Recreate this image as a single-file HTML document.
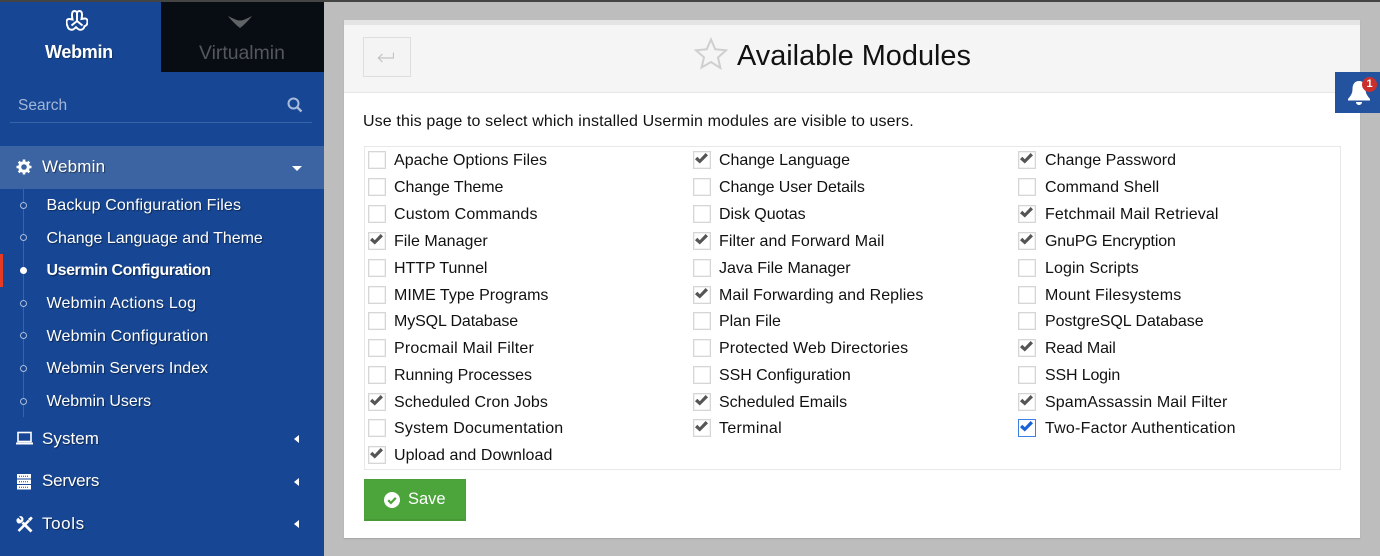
<!DOCTYPE html>
<html><head><meta charset="utf-8">
<style>
html,body{margin:0;padding:0}
body{width:1380px;height:556px;overflow:hidden;position:relative;background:#bdbdbd;font-family:"Liberation Sans",sans-serif}
.a{position:absolute;white-space:nowrap}
.side{left:0;top:0;width:324px;height:556px;background:#174794}
.m{color:#fff;font-size:16px;line-height:20px;left:46.5px;text-shadow:1px 1px 1px rgba(0,0,0,.45)}
.t{color:#fff;font-size:17px;line-height:22px;left:42px;text-shadow:1px 1px 1px rgba(0,0,0,.45)}
.d{left:20px;width:5px;height:5px;border:1px solid #a9bcdc;border-radius:50%;background:#174794}
.l{color:#111;font-size:16px;line-height:20px;letter-spacing:-.05px}
.c{width:16px;height:16px;border:1px solid #d6d6d6;background:#fff;box-shadow:inset 0 0 0 .5px #e6e6e6}
.c svg{position:absolute;left:1px;top:1px}
.lt{width:0;height:0;border-top:4.5px solid transparent;border-bottom:4.5px solid transparent;border-right:5px solid #fff;left:294px}
</style></head><body>
<svg width="0" height="0" style="position:absolute"><defs><path id="k" d="M0 6.200L2.300 3.800 4.800 6.300 10.600 0 13 2.400 4.800 10.500z"/></defs></svg>
<div class="a" style="left:0;top:0;width:1380px;height:2px;background:#444;z-index:9"></div>
<div class="a side"></div>
<div class="a" style="left:161px;top:2px;width:163px;height:70px;background:#080d13"></div>
<svg class="a" style="left:66px;top:10px" width="22" height="22" viewBox="0 0 22 22"><path d="M7 1.500c1.500-1 3-.5 4 1c1-1.500 2.500-2 4-1c1.500 1.200 1 5 .5 7.500l3-.5c2-.3 3 1.200 3 3.200c0 2.500-1.200 4-3 4.500c-.5 2.500-2.500 4-5 3.500c-1-.2-2-1-3.500-2.500c-1.500 1.500-2.500 2.300-3.500 2.500c-2.500.5-4.500-1-5-3.500C1.700 16.200.5 14.700.5 12.200c0-2 1-3.500 3-3.200l3 .5c-.5-2.500-1-6.300.5-8z" fill="none" stroke="#fff" stroke-width="2"/><path d="M11 3v8M5.500 15.500l5.500-4.500 5.500 4.500" fill="none" stroke="#fff" stroke-width="2"/></svg>
<div class="a" style="left:45px;top:40px;color:#fff;font-size:18px;font-weight:700;line-height:24px;letter-spacing:-.3px;text-shadow:1px 1px 1px rgba(0,0,0,.3)">Webmin</div>
<svg class="a" style="left:228px;top:16px" width="24" height="12" viewBox="0 0 24 12"><path d="M0 0C6 3 9 4.500 12 4.500S18 3 24 0C20 5 16 9 12 12C8 9 4 5 0 0z" fill="#606366"/></svg>
<div class="a" style="left:199px;top:41px;color:#54575b;font-size:19.400px;line-height:24px">Virtualmin</div>
<div class="a" style="left:18px;top:96px;color:#a3b6d6;font-size:15.500px;line-height:20px">Search</div>
<svg class="a" style="left:287px;top:97px" width="16" height="16" viewBox="0 0 16 16"><circle cx="6.500" cy="6.500" r="5" fill="none" stroke="#a9bcdc" stroke-width="2"/><path d="M10.300 10.300l4.200 4.200" stroke="#a9bcdc" stroke-width="2.400"/></svg>
<div class="a" style="left:10px;top:122px;width:302px;height:1px;background:#3a62a6"></div>
<div class="a" style="left:0;top:146px;width:324px;height:43px;background:#3c64a3"></div>
<svg class="a" style="left:16px;top:159px" width="16" height="16" viewBox="0 0 16 16"><circle cx="8" cy="8" r="4.300" fill="none" stroke="#fff" stroke-width="3"/><path d="M8 .5v3M8 12.500v3M.5 8h3M12.500 8h3M2.700 2.700l2.100 2.100M11.200 11.200l2.100 2.100M13.300 2.700l-2.100 2.100M4.800 11.200l-2.100 2.100" stroke="#fff" stroke-width="2.600"/></svg>
<div class="a t" style="top:156px;letter-spacing:.2px">Webmin</div>
<div class="a" style="left:292px;top:166px;width:0;height:0;border-left:5px solid transparent;border-right:5px solid transparent;border-top:5px solid #fff"></div>
<div class="a" style="left:23px;top:189px;width:1px;height:228px;background:#3a62a6"></div>
<div class="a" style="left:0;top:254px;width:3px;height:33px;background:#e53a26"></div>
<div class="a d" style="top:202px"></div><div class="a d" style="top:234px"></div>
<div class="a" style="left:20px;top:267px;width:7px;height:7px;border-radius:50%;background:#fff"></div>
<div class="a d" style="top:300px"></div><div class="a d" style="top:332px"></div><div class="a d" style="top:365px"></div><div class="a d" style="top:398px"></div>
<div class="a m" style="top:196px;letter-spacing:.13px">Backup Configuration Files</div>
<div class="a m" style="top:229px;letter-spacing:-.02px">Change Language and Theme</div>
<div class="a m" style="top:261px;font-weight:700;letter-spacing:-.44px">Usermin Configuration</div>
<div class="a m" style="top:294px;letter-spacing:.23px">Webmin Actions Log</div>
<div class="a m" style="top:327px;letter-spacing:.2px">Webmin Configuration</div>
<div class="a m" style="top:359px;letter-spacing:0">Webmin Servers Index</div>
<div class="a m" style="top:392px;letter-spacing:0">Webmin Users</div>
<svg class="a" style="left:15px;top:431px" width="19" height="15" viewBox="0 0 19 15"><rect x="3" y="1.500" width="13" height="9" fill="none" stroke="#fff" stroke-width="1.600"/><rect x="1" y="11.500" width="17" height="2" fill="#fff"/></svg>
<div class="a t" style="top:428px;letter-spacing:.05px">System</div><div class="a lt" style="top:435px"></div>
<svg class="a" style="left:17px;top:474px" width="14" height="16" viewBox="0 0 14 16"><rect y="0" width="14" height="4.500" fill="#fff"/><rect y="5.500" width="14" height="4.500" fill="#fff"/><rect y="11" width="14" height="4.500" fill="#fff"/><path d="M2 2.200h10M2 7.700h10M2 13.200h10" stroke="#174794" stroke-dasharray="1 1"/></svg>
<div class="a t" style="top:470px;letter-spacing:-.2px">Servers</div><div class="a lt" style="top:478px"></div>
<svg class="a" style="left:16px;top:516px" width="17" height="17" viewBox="0 0 17 17"><path d="M2.500 15L13 4.500" stroke="#fff" stroke-width="2.600"/><path d="M12 3l3-2.500 1.800 1.800L14.300 5.300z" fill="#fff"/><path d="M15.500 15.500L6.500 6.500" stroke="#fff" stroke-width="2.800"/><path d="M.5 3.500L3.500.3c2-.6 4 .8 4 3 0 2-2.200 4.300-4.500 4.200C1.200 7.300.2 5.500.5 3.500z" fill="#fff"/><path d="M2.500 1l2.500 2.500" stroke="#174794" stroke-width="1.500"/></svg>
<div class="a t" style="top:513px;letter-spacing:.6px">Tools</div><div class="a lt" style="top:520px"></div>

<div class="a" style="left:344px;top:20px;width:1016px;height:518px;background:#fff;box-shadow:0 1px 1px #a5a5a5"></div>
<div class="a" style="left:344px;top:20px;width:1016px;height:5px;background:#e4e4e4"></div>
<div class="a" style="left:344px;top:25px;width:1016px;height:67px;background:#f5f5f5;border-bottom:1px solid #e6e6e6"></div>
<div class="a" style="left:363px;top:37px;width:46px;height:38px;border:1px solid #dedede;background:#f4f4f4"></div>
<svg class="a" style="left:377px;top:51px" width="17" height="13" viewBox="0 0 17 13"><path d="M16.500 1.500v5.500H1.500M5.500 3L1.300 7 5.500 11" fill="none" stroke="#c4c4c4" stroke-width="1.200"/></svg>
<svg class="a" style="left:694px;top:37px" width="34" height="33" viewBox="0 0 34 33"><path d="M17 2.500l4.300 9.800 10.700 1-8 7.200 2.400 10.500L17 25l-9.400 5.500L10 20.300 2 13.300l10.700-1z" fill="none" stroke="#cfcfcf" stroke-width="2"/></svg>
<div class="a" style="left:737px;top:38px;color:#111;font-size:28.900px;line-height:36px">Available Modules</div>
<div class="a l" style="left:363px;top:112px;letter-spacing:.12px">Use this page to select which installed Usermin modules are visible to users.</div>
<div class="a" style="left:364px;top:146px;width:975px;height:322px;border:1px solid #e8e8e8"></div>

<div class="a c" style="left:368px;top:151px"></div><div class="a l" style="left:394px;top:151px;letter-spacing:.05px">Apache Options Files</div>
<div class="a c" style="left:693px;top:151px"><svg width="13" height="11" viewBox="0 0 13 11" fill="#555"><use href="#k"/></svg></div><div class="a l" style="left:719px;top:151px">Change Language</div>
<div class="a c" style="left:1018px;top:151px"><svg width="13" height="11" viewBox="0 0 13 11" fill="#555"><use href="#k"/></svg></div><div class="a l" style="left:1045px;top:151px;letter-spacing:.02px">Change Password</div>

<div class="a c" style="left:368px;top:178px"></div><div class="a l" style="left:394px;top:178px">Change Theme</div>
<div class="a c" style="left:693px;top:178px"></div><div class="a l" style="left:719px;top:178px;letter-spacing:-.1px">Change User Details</div>
<div class="a c" style="left:1018px;top:178px"></div><div class="a l" style="left:1045px;top:178px;letter-spacing:.03px">Command Shell</div>

<div class="a c" style="left:368px;top:205px"></div><div class="a l" style="left:394px;top:205px;letter-spacing:.15px">Custom Commands</div>
<div class="a c" style="left:693px;top:205px"></div><div class="a l" style="left:719px;top:205px">Disk Quotas</div>
<div class="a c" style="left:1018px;top:205px"><svg width="13" height="11" viewBox="0 0 13 11" fill="#555"><use href="#k"/></svg></div><div class="a l" style="left:1045px;top:205px;letter-spacing:.12px">Fetchmail Mail Retrieval</div>

<div class="a c" style="left:368px;top:232px"><svg width="13" height="11" viewBox="0 0 13 11" fill="#555"><use href="#k"/></svg></div><div class="a l" style="left:394px;top:232px;letter-spacing:.03px">File Manager</div>
<div class="a c" style="left:693px;top:232px"><svg width="13" height="11" viewBox="0 0 13 11" fill="#555"><use href="#k"/></svg></div><div class="a l" style="left:719px;top:232px;letter-spacing:.08px">Filter and Forward Mail</div>
<div class="a c" style="left:1018px;top:232px"><svg width="13" height="11" viewBox="0 0 13 11" fill="#555"><use href="#k"/></svg></div><div class="a l" style="left:1045px;top:232px;letter-spacing:-.17px">GnuPG Encryption</div>

<div class="a c" style="left:368px;top:259px"></div><div class="a l" style="left:394px;top:259px">HTTP Tunnel</div>
<div class="a c" style="left:693px;top:259px"></div><div class="a l" style="left:719px;top:259px;letter-spacing:0">Java File Manager</div>
<div class="a c" style="left:1018px;top:259px"></div><div class="a l" style="left:1045px;top:259px;letter-spacing:.1px">Login Scripts</div>

<div class="a c" style="left:368px;top:286px"></div><div class="a l" style="left:394px;top:286px;letter-spacing:0">MIME Type Programs</div>
<div class="a c" style="left:693px;top:286px"><svg width="13" height="11" viewBox="0 0 13 11" fill="#555"><use href="#k"/></svg></div><div class="a l" style="left:719px;top:286px;letter-spacing:.06px">Mail Forwarding and Replies</div>
<div class="a c" style="left:1018px;top:286px"></div><div class="a l" style="left:1045px;top:286px;letter-spacing:.18px">Mount Filesystems</div>

<div class="a c" style="left:368px;top:312px"></div><div class="a l" style="left:394px;top:312px;letter-spacing:-.12px">MySQL Database</div>
<div class="a c" style="left:693px;top:312px"></div><div class="a l" style="left:719px;top:312px">Plan File</div>
<div class="a c" style="left:1018px;top:312px"></div><div class="a l" style="left:1045px;top:312px">PostgreSQL Database</div>

<div class="a c" style="left:368px;top:339px"></div><div class="a l" style="left:394px;top:339px;letter-spacing:.2px">Procmail Mail Filter</div>
<div class="a c" style="left:693px;top:339px"></div><div class="a l" style="left:719px;top:339px;letter-spacing:.11px">Protected Web Directories</div>
<div class="a c" style="left:1018px;top:339px"><svg width="13" height="11" viewBox="0 0 13 11" fill="#555"><use href="#k"/></svg></div><div class="a l" style="left:1045px;top:339px;letter-spacing:-.16px">Read Mail</div>

<div class="a c" style="left:368px;top:366px"></div><div class="a l" style="left:394px;top:366px">Running Processes</div>
<div class="a c" style="left:693px;top:366px"></div><div class="a l" style="left:719px;top:366px">SSH Configuration</div>
<div class="a c" style="left:1018px;top:366px"></div><div class="a l" style="left:1045px;top:366px;letter-spacing:-.16px">SSH Login</div>

<div class="a c" style="left:368px;top:393px"><svg width="13" height="11" viewBox="0 0 13 11" fill="#555"><use href="#k"/></svg></div><div class="a l" style="left:394px;top:393px;letter-spacing:.05px">Scheduled Cron Jobs</div>
<div class="a c" style="left:693px;top:393px"><svg width="13" height="11" viewBox="0 0 13 11" fill="#555"><use href="#k"/></svg></div><div class="a l" style="left:719px;top:393px;letter-spacing:0">Scheduled Emails</div>
<div class="a c" style="left:1018px;top:393px"><svg width="13" height="11" viewBox="0 0 13 11" fill="#555"><use href="#k"/></svg></div><div class="a l" style="left:1045px;top:393px;letter-spacing:.12px">SpamAssassin Mail Filter</div>

<div class="a c" style="left:368px;top:419px"></div><div class="a l" style="left:394px;top:419px;letter-spacing:.2px">System Documentation</div>
<div class="a c" style="left:693px;top:419px"><svg width="13" height="11" viewBox="0 0 13 11" fill="#555"><use href="#k"/></svg></div><div class="a l" style="left:719px;top:419px;letter-spacing:.32px">Terminal</div>
<div class="a c" style="left:1018px;top:419px;border-color:#3f7fe0;box-shadow:none"><svg width="13" height="11" viewBox="0 0 13 11" fill="#1a62d6"><use href="#k"/></svg></div><div class="a l" style="left:1045px;top:419px;letter-spacing:.23px">Two-Factor Authentication</div>

<div class="a c" style="left:368px;top:446px"><svg width="13" height="11" viewBox="0 0 13 11" fill="#555"><use href="#k"/></svg></div><div class="a l" style="left:394px;top:446px;letter-spacing:.05px">Upload and Download</div>

<div class="a" style="left:364px;top:479px;width:100px;height:39px;background:#4ca53b;border:1px solid #4a9f39;border-bottom:2px solid #479a36"></div>
<svg class="a" style="left:384px;top:492px" width="16" height="16" viewBox="0 0 16 16"><circle cx="8" cy="8" r="8" fill="#fff"/><path d="M4.200 8.200l2.700 2.700 4.900-5" fill="none" stroke="#4ca53b" stroke-width="2.200"/></svg>
<div class="a" style="left:408px;top:489px;color:#fff;font-size:16.500px;line-height:21px">Save</div>

<div class="a" style="left:1335px;top:72px;width:45px;height:41px;background:#23529f"></div>
<svg class="a" style="left:1347px;top:80px" width="24" height="26" viewBox="0 0 24 26"><path d="M12 1c-4.500 0-6.500 3.500-6.500 8 0 5-2.500 7.500-4.500 10v1.500h22V19c-2-2.500-4.500-5-4.500-10 0-4.500-2-8-6.500-8z" fill="#fff"/><path d="M9 22h6c0 1.800-1.300 3-3 3s-3-1.200-3-3z" fill="#fff"/></svg>
<div class="a" style="left:1362px;top:77px;width:15px;height:15px;border-radius:50%;background:#c9302c;color:#fff;font-size:11px;font-weight:700;line-height:15px;text-align:center">1</div>
</body></html>
